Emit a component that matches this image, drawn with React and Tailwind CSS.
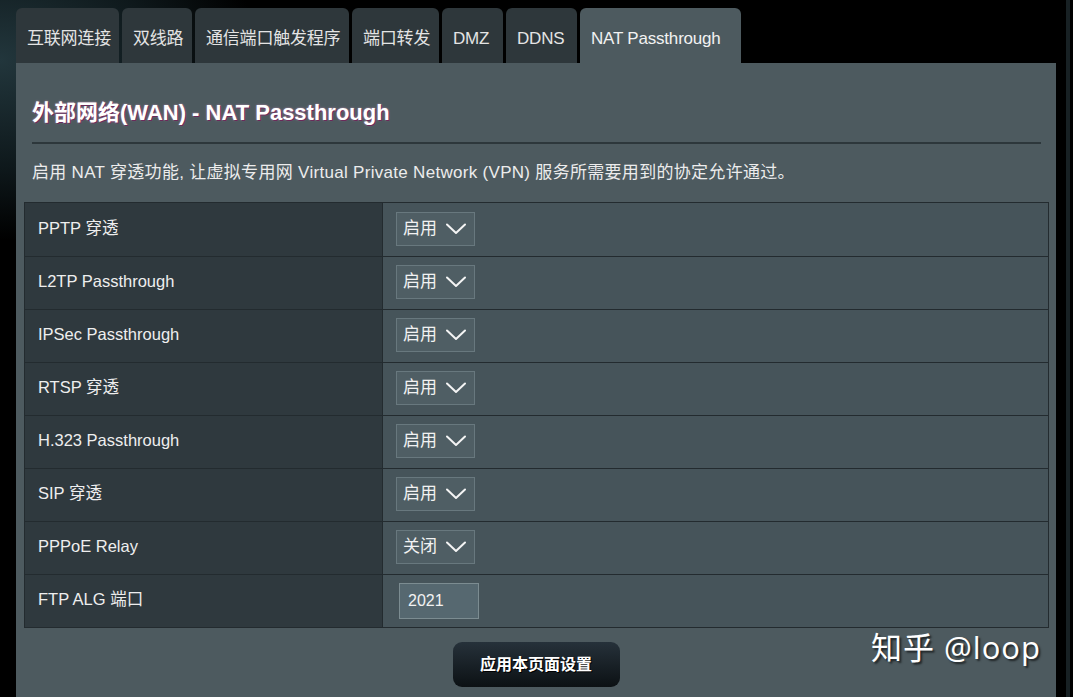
import React from "react";

const tabs = [
  { label: "互联网连接", w: "w-[103px]" },
  { label: "双线路", w: "w-[70px]" },
  { label: "通信端口触发程序", w: "w-[154px]" },
  { label: "端口转发", w: "w-[87px]" },
  { label: "DMZ", w: "w-[61px]" },
  { label: "DDNS", w: "w-[71px]" },
  { label: "NAT Passthrough", w: "w-[161px]", active: true },
];

const rows = [
  { label: "PPTP 穿透", value: "启用" },
  { label: "L2TP Passthrough", value: "启用" },
  { label: "IPSec Passthrough", value: "启用" },
  { label: "RTSP 穿透", value: "启用" },
  { label: "H.323 Passthrough", value: "启用" },
  { label: "SIP 穿透", value: "启用" },
  { label: "PPPoE Relay", value: "关闭" },
  { label: "FTP ALG 端口", input: "2021" },
];

const font = "font-['Liberation_Sans','Noto_Sans_CJK_SC',sans-serif]";

const Chevron = () => (
  <svg width="20" height="12" viewBox="0 0 20 12" fill="none">
    <polyline points="1,1.5 10,10 19,1.5" stroke="#f4f4f4" strokeWidth="2" strokeLinecap="round" strokeLinejoin="round" />
  </svg>
);

const App = () => {
  return (
    <div
      className={`relative w-[1073px] h-[697px] overflow-hidden bg-black bg-[radial-gradient(ellipse_260px_180px_at_0px_60px,#22363c_0%,#0e181b_60%,#000_100%)] ${font}`}
    >
      <div className="flex h-full">
        <div className="w-[1056px] pl-4 pt-2 flex flex-col">
          {/* Tabs */}
          <div className="flex gap-[3px] h-[55px]">
            {tabs.map((t) => (
              <div
                key={t.label}
                className={`${t.w} h-full rounded-t-[6px] flex items-center pl-[11px] pt-[6px] text-[17px] tracking-[-0.2px] whitespace-nowrap ${
                  t.active
                    ? "bg-[#4d5a5f] text-[#f2f2f2]"
                    : "bg-[#2e373b] text-[#e4e4e4]"
                }`}
              >
                {t.label}
              </div>
            ))}
          </div>

          {/* Panel */}
          <div className="flex-1 bg-[#4d5a5f] flex flex-col">
            <div className="px-4 pt-[36px]">
              <h1 className="text-[22px] font-bold text-white leading-[28px] [text-shadow:1px_1px_0_#6b2a5a,0_0_2px_#c28fb8]">
                外部网络(WAN) - NAT Passthrough
              </h1>
              <div className="mt-[15px] h-[2px] bg-[#2d373b] w-[1009px]" />
              <p className="mt-[18px] text-[17px] leading-[22px] tracking-[0.3px] text-[#ececec] whitespace-nowrap">
                启用 NAT 穿透功能, 让虚拟专用网 Virtual Private Network (VPN) 服务所需要用到的协定允许通过。
              </p>
            </div>

            {/* Table */}
            <div className="ml-2 mt-[18px] w-[1025px] border border-[#232b2f] flex flex-col">
              {rows.map((r, i) => (
                <div
                  key={r.label}
                  className={`flex h-[53px] ${i > 0 ? "border-t border-[#232b2f]" : ""}`}
                >
                  <div className="w-[358px] bg-[#2f393e] border-r border-[#232b2f] flex items-center pl-[13px] pb-[3px] text-[16.5px] text-[#eeeeee]">
                    {r.label}
                  </div>
                  <div className="flex-1 bg-[#46545a] flex items-center">
                    {r.input ? (
                      <div className="ml-[16px] w-[80px] h-[36px] bg-[#566870] border border-[#7c8c91] flex items-center pl-[8px] text-[16px] text-[#f2f2f2]">
                        {r.input}
                      </div>
                    ) : (
                      <div className="ml-[13px] mb-[2px] w-[79px] h-[34px] bg-[#4f5e64] border border-[#68787e] flex items-center pl-[6px] gap-[9px] text-[17px] text-[#f2f2f2]">
                        <span>{r.value}</span>
                        <Chevron />
                      </div>
                    )}
                  </div>
                </div>
              ))}
            </div>

            {/* Apply button */}
            <div className="flex justify-center mt-[14px]">
              <button className="w-[167px] h-[45px] rounded-[9px] bg-[linear-gradient(to_bottom,#26313a,#0c1114)] text-white text-[16px] font-bold [text-shadow:1px_1px_0_#000]">
                应用本页面设置
              </button>
            </div>
          </div>
        </div>
        <div className="w-[10px]" />
        <div className="w-[4px] h-full bg-[#182124]" />
      </div>

      {/* watermark overlay */}
      <div className="absolute left-[871px] top-[624px] text-[31px] text-white font-['Open_Sans','Noto_Sans_CJK_SC',sans-serif] [text-shadow:2px_2px_2px_rgba(0,0,0,0.6)] tracking-[1px]">
        知乎 @loop
      </div>
    </div>
  );
};

export default App;
